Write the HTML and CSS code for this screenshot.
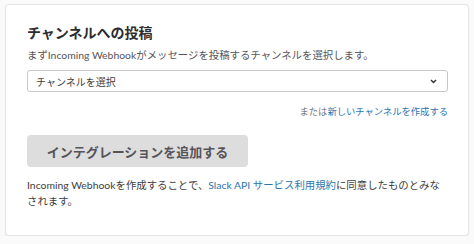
FILE: index.html
```html
<!DOCTYPE html>
<html lang="ja">
<head>
    <meta charset="UTF-8">
    <title>Incoming Webhook</title>
    <link rel="stylesheet" href="styles.css">
</head>
<body>
    <div class="card">
        <h2>チャンネルへの投稿</h2>
        <p class="lead">まずIncoming Webhookがメッセージを投稿するチャンネルを選択します。</p>
        <div class="select">
            <span>チャンネルを選択</span>
            <svg class="chevron" width="7" height="5" viewBox="0 0 7 5"><path d="M1 1 L3.5 3.5 L6 1" fill="none" stroke="#333" stroke-width="1.5"/></svg>
        </div>
        <p class="create">または<a href="#">新しいチャンネルを作成する</a></p>
        <button class="add">インテグレーションを追加する</button>
        <p class="terms">Incoming Webhookを作成することで、<a href="#">Slack API サービス利用規約</a>に同意したものとみなされます。</p>
    </div>
</body>
</html>
```

FILE: styles.css
```css
body {
    margin: 0;
    padding: 4px 6px 0 5px;
    background: #fafafa;
    font-family: Lato, "Noto Sans CJK JP", sans-serif;
    color: #3d3c40;
}
a {
    color: #2a74b0;
    text-decoration: none;
}
.card {
    width: 421px;
    padding: 18px 20px 26px 21px;
    background: #fff;
    border: 1px solid #e6e6e6;
    border-radius: 4px;
    box-shadow: 0 1px 2px rgba(0, 0, 0, 0.07);
}
h2 {
    margin: 0;
    font-size: 14px;
    line-height: 20px;
    font-weight: bold;
    color: #2c2d30;
}
.lead {
    margin: 4px 0 0;
    font-size: 10.4px;
    line-height: 16px;
    color: #555459;
}
.select {
    display: flex;
    align-items: center;
    justify-content: space-between;
    height: 20px;
    margin-top: 7px;
    padding: 0 10px 0 8px;
    border: 1px solid #c8c8c8;
    border-radius: 3px;
    font-size: 10px;
    color: #3d3c40;
}
.create {
    margin: 13px 0 0;
    text-align: right;
    font-size: 9.3px;
    line-height: 14px;
    color: #7a797e;
}
.add {
    display: block;
    margin-top: 16px;
    width: 221px;
    height: 32px;
    padding: 0;
    border: none;
    border-radius: 4px;
    background: #dddddd;
    font-family: Lato, "Noto Sans CJK JP", sans-serif;
    font-size: 13px;
    font-weight: bold;
    color: #555459;
}
.terms {
    margin: 10px 0 0;
    padding-right: 8px;
    font-size: 10.4px;
    line-height: 16px;
    color: #3d3c40;
}
```
